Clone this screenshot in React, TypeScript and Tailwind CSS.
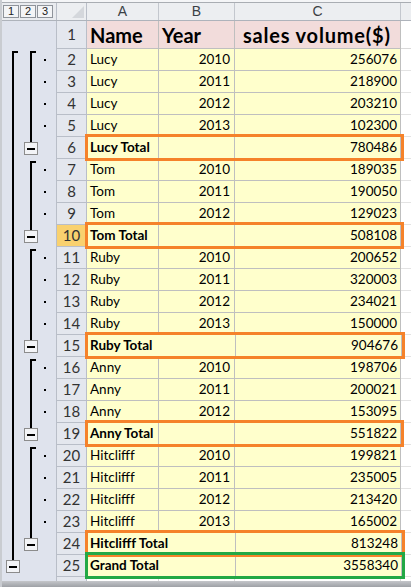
import React from "react";

type Row = {
  num: number;
  a: string;
  b: string;
  c: string;
  kind: "detail" | "total" | "grand";
  first: boolean;
  overflow: boolean;
};

const groups: { name: string; items: [number, number][]; total: number; long: boolean }[] = [
  { name: "Lucy", items: [[2010, 256076], [2011, 218900], [2012, 203210], [2013, 102300]], total: 780486, long: false },
  { name: "Tom", items: [[2010, 189035], [2011, 190050], [2012, 129023]], total: 508108, long: false },
  { name: "Ruby", items: [[2010, 200652], [2011, 320003], [2012, 234021], [2013, 150000]], total: 904676, long: true },
  { name: "Anny", items: [[2010, 198706], [2011, 200021], [2012, 153095]], total: 551822, long: false },
  { name: "Hitclifff", items: [[2010, 199821], [2011, 235005], [2012, 213420], [2013, 165002]], total: 813248, long: true },
];

const rows: Row[] = [];
let n = 2;
groups.forEach((g) => {
  g.items.forEach(([y, v], i) => {
    rows.push({ num: n++, a: g.name, b: String(y), c: String(v), kind: "detail", first: i === 0, overflow: false });
  });
  rows.push({ num: n++, a: `${g.name} Total`, b: "", c: String(g.total), kind: "total", first: false, overflow: g.long });
});
rows.push({ num: n++, a: "Grand Total", b: "", c: "3558340", kind: "grand", first: false, overflow: true });

const font = { fontFamily: "Lato, 'Open Sans', sans-serif" };

function MinusBtn({ left }: { left: string }) {
  return (
    <div
      className={`absolute top-[5px] ${left} w-[14px] h-[13px] border border-[#8c8c8c] bg-[#f3f4f7] flex items-center justify-center`}
    >
      <div className="w-[8px] h-[2px] bg-black" />
    </div>
  );
}

function Gutter({ r, isFirstAll }: { r: Row; isFirstAll: boolean }) {
  return (
    <div className="relative w-[55px] shrink-0 bg-[#dfe3ed] border-r border-[#b9bec8]">
      {r.kind === "grand" ? (
        <>
          <div className="absolute left-[10px] top-0 h-[5px] w-[2px] bg-black" />
          <div className="absolute top-[5px] left-[4px] w-[14px] h-[13px] border border-[#8c8c8c] bg-[#f3f4f7] flex items-center justify-center">
            <div className="w-[8px] h-[2px] bg-black" />
          </div>
        </>
      ) : isFirstAll ? (
        <>
          <div className="absolute left-[10px] top-[2px] bottom-0 w-[2px] bg-black" />
          <div className="absolute left-[10px] top-[2px] h-[2px] w-[6px] bg-black" />
        </>
      ) : (
        <div className="absolute left-[10px] top-0 bottom-0 w-[2px] bg-black" />
      )}
      {r.kind === "detail" &&
        (r.first ? (
          <>
            <div className="absolute left-[28px] top-[2px] bottom-0 w-[2px] bg-black" />
            <div className="absolute left-[28px] top-[2px] h-[2px] w-[6px] bg-black" />
          </>
        ) : (
          <div className="absolute left-[28px] top-0 bottom-0 w-[2px] bg-black" />
        ))}
      {r.kind === "detail" && <div className="absolute left-[42px] top-[10px] w-[2px] h-[2px] bg-black" />}
      {r.kind === "total" && (
        <>
          <div className="absolute left-[28px] top-0 h-[5px] w-[2px] bg-black" />
          <MinusBtn left="left-[22px]" />
        </>
      )}
    </div>
  );
}

export default function App() {
  return (
    <div
      className="w-[411px] h-[587px] overflow-hidden bg-white flex flex-col border-l-2 border-[#c9ccd1]"
      style={font}
    >
      <div className="h-[3px] shrink-0 bg-[#f4f5f7] border-b border-[#a9adb3]" />
      <div className="flex h-[18px] shrink-0 border-b border-[#aeb3bb] bg-[#eceef1]">
        <div className="w-[55px] shrink-0 flex items-center gap-[1px] pl-[1px] border-r border-[#b9bec8] bg-[#e9ebef]">
          {["1", "2", "3"].map((t) => (
            <div
              key={t}
              className="w-[16px] h-[13px] border border-[#8f949b] bg-[#f3f4f6] text-[11px] leading-[11px] text-[#222] flex items-center justify-center"
              style={{ fontFamily: "'Liberation Sans', Arial, sans-serif" }}
            >
              {t}
            </div>
          ))}
        </div>
        <div className="relative w-[30px] shrink-0 border-r border-[#b9bec8] bg-[#eceef1] overflow-hidden">
          <div className="absolute right-[2px] bottom-[2px] w-0 h-0 border-l-[12px] border-l-transparent border-b-[12px] border-b-[#d4d7dc]" />
        </div>
        {[
          ["A", "w-[72px]"],
          ["B", "w-[76px]"],
          ["C", "w-[166px]"],
        ].map(([l, w]) => (
          <div
            key={l}
            className={`${w} shrink-0 border-r border-[#c3c7ce] flex items-center justify-center text-[14px] text-[#3b3f45]`}
            style={{ fontFamily: "'Liberation Sans', Arial, sans-serif" }}
          >
            {l}
          </div>
        ))}
        <div className="flex-1" />
      </div>
      <div className="flex h-[28px] shrink-0">
        <div className="w-[55px] shrink-0 bg-[#dfe3ed] border-r border-[#b9bec8]" />
        <div className="w-[30px] shrink-0 bg-[#e4e7ee] border-r border-b border-[#b9bec8] flex items-end justify-center pb-[3px] text-[15px] text-[#333]">
          1
        </div>
        <div className="w-[72px] shrink-0 bg-[#f2dcdb] border-r border-b border-[#bfbfbf] flex items-end pl-[3px] pb-[1px] text-[20px] font-bold text-black leading-[24px]">
          Name
        </div>
        <div className="w-[76px] shrink-0 bg-[#f2dcdb] border-r border-b border-[#bfbfbf] flex items-end pl-[3px] pb-[1px] text-[20px] font-bold text-black leading-[24px] whitespace-nowrap">
          Year
        </div>
        <div className="w-[166px] shrink-0 bg-[#f2dcdb] border-r border-b border-[#bfbfbf] flex items-end pl-[8px] pb-[1px] text-[20px] font-bold text-black leading-[24px] whitespace-nowrap tracking-[0.8px]">
          sales volume($)
        </div>
        <div className="flex-1 border-b border-[#d9d9d9]" />
      </div>
      {rows.map((r, i) => {
        const bold = r.kind !== "detail";
        const active = r.num === 10;
        return (
          <div key={r.num} className="flex h-[22px] shrink-0">
            <Gutter r={r} isFirstAll={i === 0} />
            <div
              className={`w-[30px] shrink-0 border-r border-b border-[#b9bec8] flex items-center justify-center text-[15px] text-[#333] ${
                active ? "bg-[#f9d16f]" : "bg-[#e4e7ee]"
              }`}
            >
              {r.num}
            </div>
            <div className="relative flex shrink-0">
              <div
                className={`shrink-0 bg-[#ffffcc] border-b border-[#bfbfbf] flex items-center pl-[3px] text-[13.5px] text-black whitespace-nowrap ${
                  bold ? "font-bold" : ""
                } ${r.overflow ? "w-[73px] border-r-0" : "w-[72px] border-r"}`}
              >
                <span className="relative z-[5]">{r.a}</span>
              </div>
              <div className="w-[76px] shrink-0 bg-[#ffffcc] border-r border-b border-[#bfbfbf] flex items-center justify-end pr-[4px] text-[13.5px] text-black">
                {r.b}
              </div>
              <div className="w-[166px] shrink-0 bg-[#ffffcc] border-r border-b border-[#bfbfbf] flex items-center justify-end pr-[3px] text-[13.5px] text-black">
                {r.c}
              </div>
              {r.kind !== "detail" && (
                <div
                  className={`absolute -left-[2px] -right-[3px] -top-[3px] -bottom-[2px] border-[3px] z-10 pointer-events-none ${
                    r.kind === "grand" ? "border-[#22a845]" : "border-[#f5822a]"
                  }`}
                />
              )}
            </div>
            <div className="flex-1 border-b border-[#e3e3e3]" />
          </div>
        );
      })}
      <div className="flex h-[4px] shrink-0">
        <div className="w-[55px] shrink-0 bg-[#dfe3ed] border-r border-[#b9bec8]" />
        <div className="w-[30px] shrink-0 bg-[#e4e7ee] border-r border-[#b9bec8]" />
        <div className="w-[72px] shrink-0 border-r border-[#d9d9d9]" />
        <div className="w-[76px] shrink-0 border-r border-[#d9d9d9]" />
        <div className="w-[166px] shrink-0 border-r border-[#d9d9d9]" />
        <div className="flex-1" />
      </div>
      <div className="flex-1 bg-gradient-to-b from-[#c4c6ca] to-[#9ea1a6]" />
    </div>
  );
}
